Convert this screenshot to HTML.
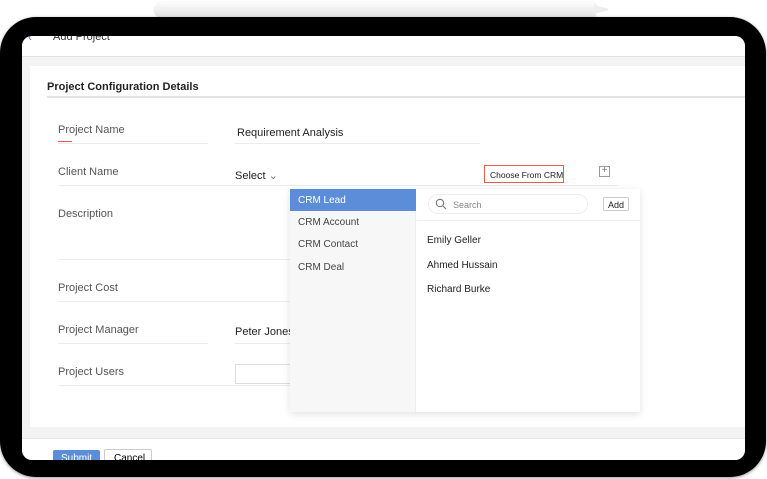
<!DOCTYPE html>
<html><head><style>
*{margin:0;padding:0;box-sizing:border-box}
body{width:767px;height:479px;background:#fff;position:relative;overflow:hidden;font-family:"Liberation Sans",sans-serif;white-space:nowrap}
.a{position:absolute}
.lbl{position:absolute;left:58px;font-size:11px;color:#555}
.val{position:absolute;font-size:11px;color:#222}
.ln{position:absolute;height:1px;background:#ececec}
</style></head><body>
<div class="a" style="left:155px;top:2px;width:440px;height:15px;border-radius:8px 2px 2px 8px;background:linear-gradient(#fdfdfd,#e2e2e2);box-shadow:0 1px 2px #bbb"></div>
<div class="a" style="left:594px;top:5px;width:14px;height:9px;background:#eee;clip-path:polygon(0 0,100% 40%,100% 60%,0 100%)"></div>
<div class="a" style="left:0;top:17px;width:766px;height:460px;background:#000;border-radius:36px;box-shadow:0 1px 3px #999"></div>
<div class="a" style="left:22px;top:36px;width:723px;height:424px;background:#f3f3f3;border-radius:10px;overflow:hidden">
  <div class="a" style="left:0;top:0;width:723px;height:21px;background:#fff;border-bottom:1px solid #e2e2e2"></div>
  <div class="a" style="left:6px;top:-6px;font-size:12px;color:#4a7fd6">&#8249;</div>
  <div class="a" style="left:31px;top:-5px;font-size:11px;color:#333">Add Project</div>
  <div class="a" style="left:8px;top:30px;width:715px;height:361px;background:#fff"></div>
  <div class="a" style="left:25px;top:45px;font-size:11px;font-weight:bold;color:#222">Project Configuration Details</div>
  <div class="a" style="left:25px;top:60px;width:698px;height:2px;background:#e3e3e3"></div>
  <div class="a" style="left:0;top:402px;width:723px;height:22px;background:#fff;border-top:1px solid #e5e5e5"></div>
  <div class="a" style="left:31px;top:414px;width:47px;height:14px;background:#5b8dd9;border-radius:2px;color:#fff;font-size:10px;padding:3px 0 0 8px">Submit</div>
  <div class="a" style="left:82px;top:413px;width:48px;height:16px;background:#fff;border:1px solid #ccc;border-radius:2px;font-size:10px;padding:3px 0 0 9px">Cancel</div>
</div>
<div class="lbl" style="top:124px">Project Name</div>
<div class="a" style="left:58px;top:141px;width:14px;height:1px;background:#e55"></div>
<div class="lbl" style="top:166px">Client Name</div>
<div class="lbl" style="top:208px">Description</div>
<div class="lbl" style="top:282px">Project Cost</div>
<div class="lbl" style="top:324px">Project Manager</div>
<div class="lbl" style="top:366px">Project Users</div>
<div class="ln" style="left:58px;top:143px;width:150px"></div><div class="ln" style="left:235px;top:143px;width:245px"></div>
<div class="ln" style="left:58px;top:185px;width:560px"></div>
<div class="ln" style="left:58px;top:259px;width:240px"></div>
<div class="ln" style="left:58px;top:301px;width:240px"></div>
<div class="ln" style="left:58px;top:343px;width:150px"></div><div class="ln" style="left:235px;top:343px;width:60px"></div>
<div class="ln" style="left:58px;top:385px;width:240px"></div>
<div class="val" style="left:237px;top:127px">Requirement Analysis</div>
<div class="val" style="left:235px;top:169px">Select <span style="color:#777">&#8964;</span></div>
<div class="val" style="left:235px;top:326px">Peter Jones</div>
<div class="a" style="left:235px;top:364px;width:60px;height:20px;border:1px solid #ddd"></div>
<div class="a" style="left:484px;top:165px;width:80px;height:18px;border:1px solid #e0604a;background:#fff;font-size:8.5px;color:#222;padding:4px 0 0 5px">Choose From CRM</div>
<div class="a" style="left:599px;top:166px;width:11px;height:11px;border:1px solid #999;font-size:10px;line-height:8px;text-align:center;color:#777">+</div>
<div class="a" style="left:290px;top:189px;width:350px;height:223px;background:#fff;box-shadow:0 2px 8px rgba(0,0,0,.12)">
  <div class="a" style="left:0;top:0;width:126px;height:223px;background:#f7f7f7;border-right:1px solid #eee"></div>
  <div class="a" style="left:0;top:0;width:126px;height:22px;background:#5b8dd9;color:#fff;font-size:10px;padding:6px 0 0 8px">CRM Lead</div>
  <div class="a" style="left:8px;top:28px;font-size:10px;color:#444">CRM Account</div>
  <div class="a" style="left:8px;top:50px;font-size:10px;color:#444">CRM Contact</div>
  <div class="a" style="left:8px;top:73px;font-size:10px;color:#444">CRM Deal</div>
  <div class="a" style="left:138px;top:5px;width:160px;height:20px;border:1px solid #eee;border-radius:10px;font-size:9px;color:#888;padding:5px 0 0 24px">Search</div>
  <svg class="a" style="left:145px;top:9px" width="12" height="12"><circle cx="5" cy="5" r="3.7" fill="none" stroke="#777" stroke-width="1.1"/><path d="M8 8l3 3" stroke="#777" stroke-width="1.1"/></svg>
  <div class="a" style="left:313px;top:8px;width:26px;height:14px;border:1px solid #ccc;border-radius:2px;font-size:9px;padding:2px 0 0 4px;color:#222">Add</div>
  <div class="a" style="left:127px;top:31px;width:223px;height:1px;background:#eee"></div>
  <div class="a" style="left:137px;top:46px;font-size:10px;color:#222">Emily Geller</div>
  <div class="a" style="left:137px;top:71px;font-size:10px;color:#222">Ahmed Hussain</div>
  <div class="a" style="left:137px;top:95px;font-size:10px;color:#222">Richard Burke</div>
</div>
</body></html>
